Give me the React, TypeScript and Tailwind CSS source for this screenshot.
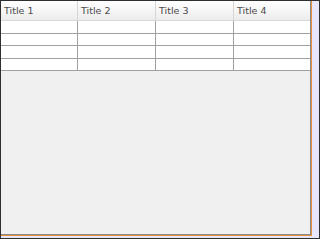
const titles = ["Title 1", "Title 2", "Title 3", "Title 4"];
const rowHeights = ["h-[13px]", "h-[12px]", "h-[13px]", "h-[12px]"];

export default function App() {
  return (
    <div className="w-[320px] h-[239px] border border-[#2f2f2f] bg-[#e8e6fa] flex flex-col box-border" style={{ fontFamily: '"DejaVu Sans", "Noto Sans CJK JP", sans-serif' }}>
      <div className="flex h-[235px]">
        {/* grid panel */}
        <div className="w-[311px] h-full border-r border-b border-[#e8923c] box-border">
          <div className="w-full h-full bg-[#f0f0f0] border-r border-b border-[#8a8a8a] box-border">
            <div className="grid grid-cols-[77px_78px_78px_1fr]">
              {titles.map((t, i) => (
                <div
                  key={t}
                  className={`h-[20px] bg-gradient-to-b from-white to-[#ececec] border-b border-[#d8d8d8] flex items-center pl-[3px] text-[9.5px] leading-none text-[#4a4a4a] ${i < 3 ? "border-r border-r-[#d6d6d6]" : ""}`}
                >
                  {t}
                </div>
              ))}
              {rowHeights.map((h, r) =>
                titles.map((t, i) => (
                  <div
                    key={`${r}-${t}`}
                    className={`${h} bg-white border-b border-[#a0a0a0] ${i < 3 ? "border-r" : ""}`}
                  />
                ))
              )}
            </div>
          </div>
        </div>
        <div className="flex-1 bg-[#e8e6fa]" />
      </div>
      <div className="flex-1 bg-[#e8e6fa]" />
    </div>
  );
}
